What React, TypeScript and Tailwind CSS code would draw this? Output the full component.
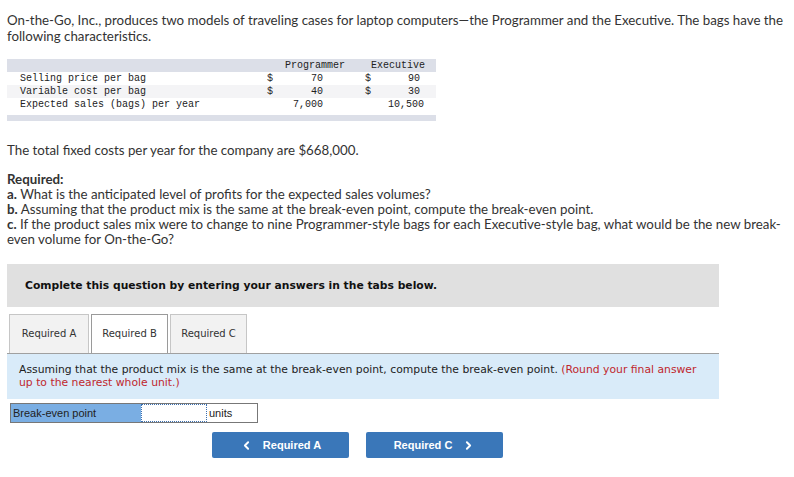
import { ChevronLeft, ChevronRight } from 'lucide-react'

const rows = [
  { label: 'Selling price per bag', p: '70', e: '90', dollar: true, bg: 'bg-white' },
  { label: 'Variable cost per bag', p: '40', e: '30', dollar: true, bg: 'bg-[#f4f4f6]' },
  { label: 'Expected sales (bags) per year', p: '7,000', e: '10,500', dollar: false, bg: 'bg-white' },
]

export default function App() {
  return (
    <div className="w-[794px] h-[477px] bg-white text-[#333] font-['Lato',sans-serif] text-[13.3px] leading-[16px] overflow-hidden">
      <div className="px-[7px] pt-[12px]">
        <p>
          On-the-Go, Inc., produces two models of traveling cases for laptop computers—the Programmer and the Executive. The bags have the following characteristics.
        </p>

        {/* data table */}
        <div className="mt-[15px] w-[429px] font-['Liberation_Mono',monospace] text-[10px] leading-[13px] text-[#222]">
          <div className="flex h-[13px] bg-[#dcdfe8]">
            <div className="w-[258px]" />
            <div className="w-[100px] text-center">Programmer</div>
            <div className="w-[66px] text-center">Executive</div>
          </div>
          {rows.map((r) => (
            <div key={r.label} className={`flex h-[13px] ${r.bg}`}>
              <div className="w-[258px] pl-[13px]">{r.label}</div>
              <div className="w-[100px] flex">
                <span className="w-[24px] pl-[2px]">{r.dollar ? '$' : ''}</span>
                <span className="w-[34px] text-right">{r.p}</span>
              </div>
              <div className="w-[66px] flex">
                <span className="w-[23px]">{r.dollar ? '$' : ''}</span>
                <span className="w-[32px] text-right">{r.e}</span>
              </div>
            </div>
          ))}
          <div className="h-[4px]" />
          <div className="h-[6px] bg-[#dcdfe8]" />
        </div>

        <p className="mt-[21px]">The total fixed costs per year for the company are $668,000.</p>

        <div className="mt-[14px] leading-[15px]">
          <p className="font-bold">Required:</p>
          <p><b>a.</b> What is the anticipated level of profits for the expected sales volumes?</p>
          <p><b>b.</b> Assuming that the product mix is the same at the break-even point, compute the break-even point.</p>
          <p><b>c.</b> If the product sales mix were to change to nine Programmer-style bags for each Executive-style bag, what would be the new break-even volume for On-the-Go?</p>
        </div>

        {/* instructions */}
        <div className="mt-[17px] w-[712px] h-[43px] bg-[#e0e0e0] flex items-center pl-[18px] font-['DejaVu_Sans',sans-serif] text-[10.75px] font-bold text-[#111]">
          Complete this question by entering your answers in the tabs below.
        </div>

        {/* tabs */}
        <div className="mt-[7px] flex gap-[2px] pl-[2px] font-['DejaVu_Sans',sans-serif] text-[10px] text-[#333]">
          <div className="w-[80px] h-[39px] flex items-center justify-center bg-[#f2f2f2] border border-b-0 border-[#c6c6c6]">Required A</div>
          <div className="w-[77px] h-[39px] flex items-center justify-center bg-white border border-b-0 border-[#9a9a9a]">Required B</div>
          <div className="w-[77px] h-[39px] flex items-center justify-center bg-[#f2f2f2] border border-b-0 border-[#c6c6c6]">Required C</div>
        </div>
        <div className="w-[712px] bg-[#d9ebf9] border-t border-[#a0a0a0] pl-[12px] pr-[8px] pt-[9px] pb-[10px] font-['DejaVu_Sans',sans-serif] text-[10.8px] leading-[13px] text-[#222]">
          Assuming that the product mix is the same at the break-even point, compute the break-even point.{' '}
          <span className="text-[#c0272d]">(Round your final answer up to the nearest whole unit.)</span>
        </div>

        {/* answer row */}
        <div className="mt-[4px] ml-[3px] flex w-[248px] h-[20px] border border-[#777] font-['Liberation_Sans',sans-serif] text-[11px] leading-[18px] text-[#222]">
          <div className="w-[130px] bg-[#7aaee3] pl-[2px]">Break-even point</div>
          <div className="w-[66px] border border-dotted border-[#3a6fb0] bg-white" />
          <div className="flex-1 pl-[2px] bg-white">units</div>
        </div>

        <div className="mt-[9px] flex gap-[17px] pl-[205px] font-['Liberation_Sans',sans-serif] text-[11px] font-bold text-white">
          <button className="w-[137px] h-[26px] rounded-[2px] bg-[#3a77b9] flex items-center justify-center gap-[10px]">
            <ChevronLeft size={13} strokeWidth={3.5} />
            Required A
          </button>
          <button className="w-[137px] h-[26px] rounded-[2px] bg-[#3a77b9] flex items-center justify-center gap-[10px]">
            Required C
            <ChevronRight size={13} strokeWidth={3.5} />
          </button>
        </div>
      </div>
    </div>
  )
}
